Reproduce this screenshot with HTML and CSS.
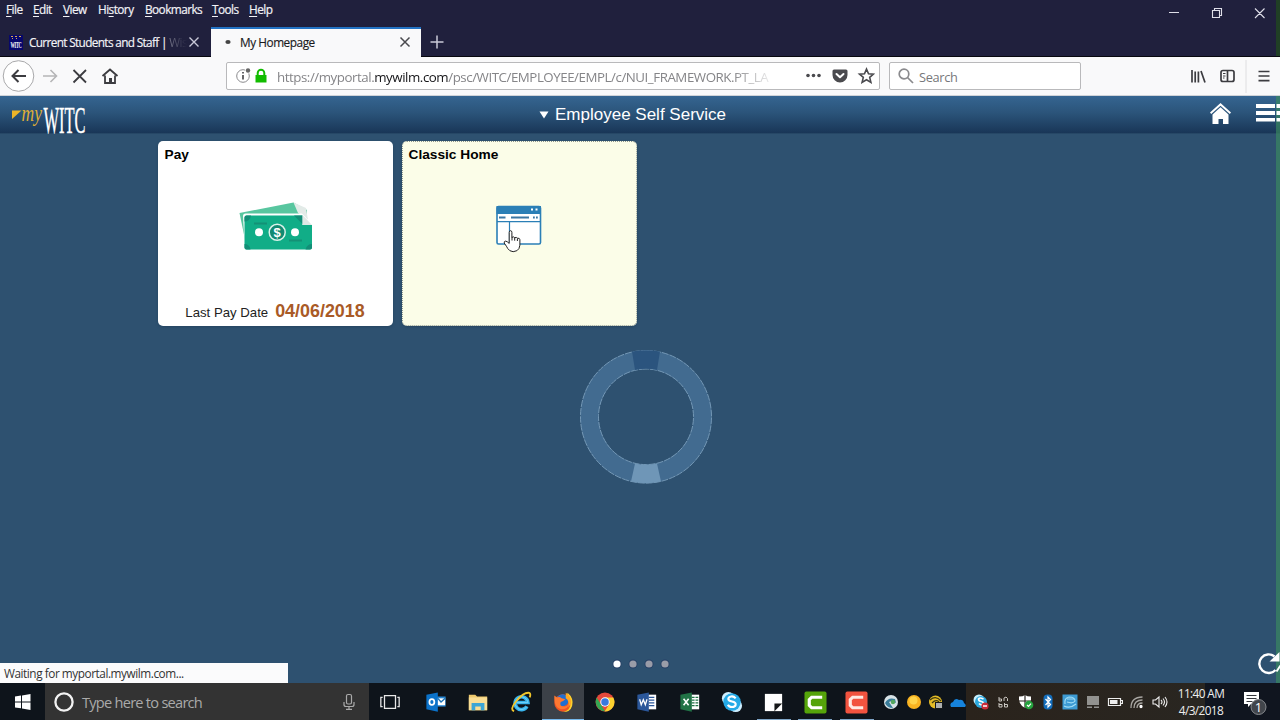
FILE: index.html
```html
<!DOCTYPE html>
<html lang="en">
<head>
<meta charset="utf-8">
<title>My Homepage</title>
<link rel="stylesheet" href="styles.css">
</head>
<body>
<div class="screen">
  <header class="titlebar">
    <div class="menurow">
      <nav class="menu"><span><u>F</u>ile</span><span><u>E</u>dit</span><span><u>V</u>iew</span><span>Hi<u>s</u>tory</span><span><u>B</u>ookmarks</span><span><u>T</u>ools</span><span><u>H</u>elp</span></nav>
      <svg class="winbtns" width="116" height="27" viewBox="0 0 116 27" fill="none" stroke="#dedee8" stroke-width="1.1"><path d="M5 13.500h10M48.500 11.500h7v7h-7zM50.500 11.500v-2h7v7h-2M91 9.500l9.500 9.500M100.500 9.500L91 19"/></svg>
    </div>
    <div class="tabs">
      <div class="tab">
        <svg width="16" height="16" viewBox="0 0 16 16"><path fill="#07076b" d="M1 1h14v15H1z"/><path fill="#d8a64c" d="M3 2h2v1H3zM7 2h2v1H7zM11 2h2v1h-2zM4 4h1v1H4zM8 4h1v1H8z"/><text x="2.500" y="14" class="favtext" textLength="11" lengthAdjust="spacingAndGlyphs">WITC</text></svg>
        <span class="tabtext">Current Students and Staff | <i>Wis</i></span>
        <svg class="tabx" width="12" height="12" viewBox="0 0 12 12"><path d="M1.500 1.500l9 9M10.500 1.500l-9 9" stroke="#c9c9d8" stroke-width="1.400"/></svg>
      </div>
      <div class="tab active">
        <svg class="load" width="6" height="6" viewBox="0 0 6 6"><ellipse cx="3" cy="3" rx="2.600" ry="2" fill="#444"/></svg>
        <span class="tabtext">My Homepage</span>
        <svg class="tabx" width="12" height="12" viewBox="0 0 12 12"><path d="M1.500 1.500l9 9M10.500 1.500l-9 9" stroke="#4a4a4e" stroke-width="1.500"/></svg>
      </div>
      <svg class="plus" width="14" height="14" viewBox="0 0 14 14"><path d="M7 .5v13M.5 7h13" stroke="#c9c9d8" stroke-width="1.500"/></svg>
    </div>
  </header>
  <div class="toolbar">
    <svg class="navicons" width="126" height="38" viewBox="0 0 126 38" fill="none" stroke="#3c3c40" stroke-width="2">
      <circle cx="18.500" cy="19" r="15.300" fill="#fff" stroke="#a9a9ab" stroke-width="1"/>
      <path d="M12.500 19H26M18.500 13l-6 6 6 6"/>
      <path d="M43 19h13.500M50.500 13l6 6-6 6" stroke="#b5b5b7" stroke-width="1.600"/>
      <path d="M73.500 13l12.500 12.500M86 13L73.500 25.500" stroke-width="1.800"/>
      <path d="M102.500 19l7.500-6.500 7.500 6.500M105 18.500V26h10v-7.500" stroke-width="1.800"/><path d="M109 21h3v5h-3z" fill="#3c3c40" stroke="none"/>
    </svg>
    <div class="field url">
      <svg width="36" height="20" viewBox="0 0 36 20" fill="none"><circle cx="8" cy="10" r="6.300" stroke="#8b8b8e"/><path d="M8 9v4.500M8 6v1.600" stroke="#4c4c50" stroke-width="1.700"/><circle cx="13" cy="4.500" r="3" fill="#fff"/><circle cx="13" cy="4.500" r="2.200" fill="#666"/><path d="M20.500 9h11v7.500h-11z" fill="#12bc00"/><path d="M22.700 9V7a3.300 3.300 0 0 1 6.600 0v2" stroke="#12bc00" stroke-width="2"/></svg>
      <span class="urltext">https://myportal.<b>mywilm.com</b>/psc/WITC/EMPLOYEE/EMPL/c/NUI_FRAMEWORK.PT_LA</span>
      <svg class="urlicons" width="74" height="20" viewBox="0 0 74 20"><g fill="#4a4a4e"><circle cx="7" cy="9.500" r="1.800"/><circle cx="12.500" cy="9.500" r="1.800"/><circle cx="18" cy="9.500" r="1.800"/><path d="M33 3.500h12q1.500 0 1.500 1.500v4a7.500 7.500 0 0 1-15 0V5q0-1.500 1.500-1.500z"/></g><path d="M35.500 8l3.500 3.300L42.500 8" fill="none" stroke="#fff" stroke-width="2" stroke-linecap="round" stroke-linejoin="round"/><path d="M65.500 3l2 4.700 5 .4-3.800 3.300 1.200 5-4.400-2.700-4.400 2.700 1.200-5-3.800-3.300 5-.4z" fill="none" stroke="#4a4a4e" stroke-width="1.600"/></svg>
    </div>
    <div class="field search"><svg width="18" height="18" viewBox="0 0 18 18" fill="none" stroke="#8a8a8d" stroke-width="1.700"><circle cx="7" cy="7" r="4.800"/><path d="M10.500 10.500l5.500 5.500"/></svg><span>Search</span></div>
    <svg class="toolicons" width="90" height="38" viewBox="0 0 90 38" fill="none" stroke="#3c3c40" stroke-width="1.700"><path d="M2 13v12.500M5.200 14.500v11M8.400 14.500v11M11 14l4 11.500"/><rect x="31" y="13.500" width="13" height="11" rx="2"/><path d="M37.500 13.500v11"/><path d="M33 16.500h2.500M33 19h2.500M33 21h1.500" stroke-width="1"/><path d="M56 3v33" stroke="#dedee0" stroke-width="1"/><path d="M68.500 14.500h11M68.500 19h11M68.500 23.700h11"/></svg>
  </div>
  <div class="appbar">
    <svg class="logo" width="80" height="34" viewBox="0 0 80 34"><path d="M2 10.500h9.500L2 19z" fill="#edb528"/><text x="11.500" y="21" class="my" textLength="20.500" lengthAdjust="spacingAndGlyphs">my</text><text x="33.500" y="33" class="witc" textLength="42" lengthAdjust="spacingAndGlyphs">WITC</text></svg>
    <div class="apptitle"><svg width="10" height="8" viewBox="0 0 10 8"><path d="M.5.500h9L5 7.500z" fill="#fff"/></svg><span>Employee Self Service</span></div>
    <svg class="appicons" width="72" height="38" viewBox="0 0 72 38" fill="#fff"><path d="M2 16.500L12.500 7l10.500 9.500-1.200 1.500-9.300-8.300L3.200 18z"/><path d="M4.500 18.500l8-7.200 8 7.200V28H15v-5h-4.500v5h-6z"/><path d="M48 8h19v4H48zM48 15h19v4H48zM48 22h19v3.500H48zM68.500 8H72v4h-3.500zM68.500 15H72v4h-3.500zM68.500 22H72v3.500h-3.500z"/></svg>
  </div>
  <main class="page">
    <div class="tiles">
      <section class="tile">
        <h2>Pay</h2>
        <svg class="money" width="76" height="52" viewBox="0 0 76 52"><path d="M1.500 12L55.500 1.500 69 9v12L8 43z" fill="#58c69f"/><path d="M55.500 1.500L68 7l2 12-10-7z" fill="#e3ebe8"/><path d="M5 15q0-2.500 2.500-2.500h56.500L75 24v26H7z" fill="#fff"/><path d="M8.500 14.500H64.500V24H74v22.500q0 2-2 2H8.500q-2 0-2-2v-30q0-2 2-2z" fill="#11ad87"/><path d="M8.500 14.500H13q-1 6-6.500 6v-4q0-2 2-2zM74 43v3.500q0 2-2 2h-4.500Q69 43 74 43zM6.500 43q5 0 6 5.500h-4q-2 0-2-2zM56 14.500h8.500V23z" fill="#138e77"/><path d="M64.500 14v10H74z" fill="#dfe8e5"/><path d="M16 22.500h13M51 39.500h13" stroke="#149176" stroke-width="2"/><circle cx="21" cy="31.300" r="4" fill="#fff"/><circle cx="57" cy="31.300" r="4" fill="#fff"/><circle cx="39.200" cy="31.300" r="8" fill="#128a72" stroke="#d9f2e9" stroke-width="1.500"/><text x="39.200" y="36" class="dollar">$</text></svg>
        <p><span>Last Pay Date</span><strong>04/06/2018</strong></p>
      </section>
      <section class="tile hover">
        <h2>Classic Home</h2>
        <svg class="window" width="46" height="50" viewBox="0 0 46 50"><rect x="1" y="1.500" width="43.500" height="37.500" rx="1.500" fill="#fff" stroke="#2b7fb6" stroke-width="1.600"/><path d="M.5 1h44.500v8H.500z" fill="#2b7fb6"/><path d="M35 3.500h2v2h-2zM39.500 3.500h2v2h-2z" fill="#fff"/><path d="M3 12.500h6.500M15 12.500h18M37 12.500h1.800M40 12.500h1.800" stroke="#3a77a4" stroke-width="1.800"/><path d="M1 16.700h43M13.500 17v21" stroke="#2b7fb6" stroke-width="1.200"/><path d="M13.200 27.500q0-1.800 1.300-1.800 1.400 0 1.400 1.800v4.800q2-1 2.800.4 2-.8 2.700.5 2.300-.4 2.500 1.500v5.500q-.4 4-3 5.500-4 2-7 0-2.500-2-3.500-4.500L8.200 38q-.3-1.800 1.500-1.900 1.500.3 3.500 2.300z" fill="#fff" stroke="#222" stroke-width="1"/><path d="M16 32v3.500M18.700 32.700v3M21.400 33.500v2.500" stroke="#222"/></svg>
      </section>
    </div>
    <div class="spin"><svg width="134" height="136" viewBox="0 0 134 136"><path fill-rule="evenodd" fill="#426b90" stroke="#7498b6" stroke-width="1" stroke-dasharray="7 1" d="M67 1.500a65.500 66.300 0 1 1 0 132.600a65.500 66.300 0 1 1 0-132.600zM67 20a47.500 47.800 0 1 0 0 95.600a47.500 47.800 0 1 0 0-95.600z"/><path d="M53 2.500q14-2.500 28 0l-3 18.500q-11-2.500-22 0z" fill="#2b547e"/><path d="M56 114.500q11 2.500 22 0l4 18q-15 3.500-30 0z" fill="#6f96b7"/></svg></div>
    <div class="pager"><i class="on"></i><i></i><i></i><i></i></div>
    <svg class="refresh" width="26" height="28" viewBox="0 0 26 28" fill="none" stroke="#fff" stroke-width="2.400"><path d="M20.500 20a9.300 9.300 0 1 1-1-13.500"/><path d="M14.500 11.500h10V2z" fill="#fff" stroke="none"/><path d="M21.500 21.500l4-6" stroke-width="2"/></svg>
    <div class="status">Waiting for myportal.mywilm.com...</div>
  </main>
  <footer class="taskbar">
    <div class="start"><svg width="16" height="16" viewBox="0 0 16 16" fill="#fff"><path d="M0 2.500L6 1.600V7.500H0zM7 1.400L15.500 0V7.500H7zM0 8.500h6v5.800L0 13.500zM7 8.500h8.500V16L7 14.600z"/></svg></div>
    <div class="find"><svg width="22" height="22" viewBox="0 0 22 22"><circle cx="11" cy="11" r="8.600" fill="none" stroke="#f2f2f2" stroke-width="2.300"/></svg><span>Type here to search</span><svg class="mic" width="12" height="18" viewBox="0 0 12 18" fill="none" stroke="#aaa" stroke-width="1.200"><rect x="3.500" y="1.500" width="5" height="9.500" rx="1.500"/><path d="M1 9v2.500q0 2 2 2h6q2 0 2-2V9M6 13.500V16M3 16.300h6"/></svg></div>
    <div class="apps">
      <span class="app first"><svg viewBox="0 0 24 24" fill="none" stroke="#e8e8e8" stroke-width="1.400"><path d="M6 5h12v14H6zM4 7H2v10h2M20 7h2v10h-2"/></svg></span>
      <span class="app"><svg viewBox="0 0 24 24"><path d="M11 6h11.500v11H11z" fill="#2687d4"/><path d="M13 8h9v7.500h-9z" fill="#fff"/><path d="M14 8l3.500 4L22 8" fill="none" stroke="#1b71b5" stroke-width="1.500"/><path d="M1.500 4L14 1.500v21L1.500 20z" fill="#0b72c9"/><ellipse cx="7.500" cy="12" rx="2.700" ry="3.200" fill="none" stroke="#fff" stroke-width="1.900"/></svg></span>
      <span class="app"><svg viewBox="0 0 24 24"><path d="M2 4h7l2 2h11v15H2z" fill="#edc86c"/><path d="M2 7h20v14H2z" fill="#f9dd94"/><path d="M5 13h14v8h-4v-4H9v4H5z" fill="#3ca5d5"/></svg></span>
      <span class="app"><svg viewBox="0 0 24 24" fill="none"><path d="M18.500 17a7 7 0 1 1 1-4.500H7" stroke="#37b4ed" stroke-width="4"/><path d="M18.500 17a7 7 0 1 1 1-4.500H7" stroke="#76d3fa" stroke-width="1"/><path d="M4.500 22q-5-1.500 2-10.500Q15 1 21 2q2 1 .5 5" stroke="#f1c52a" stroke-width="2"/></svg></span>
      <span class="app current"><svg viewBox="0 0 24 24"><circle cx="12" cy="13" r="9.500" fill="#f05524"/><path d="M17 2q7 6 5 14-2 7-10 7 9-3 8-10-1-4-4-6z" fill="#ffd22c"/><circle cx="11.500" cy="10" r="6.500" fill="#216ed1"/><path d="M2.500 5l3 2q3-1 5 1l4 1q-3 3-5 3-2 5 4 5 3 0 5-3-1 6-8 6Q2 19 2.500 5z" fill="#ff7831"/><path d="M15 2q5 3 6 10l-3 6q1-8-3-10z" fill="#ffa623"/></svg></span>
      <span class="app"><svg viewBox="0 0 24 24"><circle cx="12" cy="12" r="10.300" fill="#e5493b"/><path d="M3 7l9 15A10.300 10.300 0 0 1 3 7z" fill="#35a853"/><path d="M12 7h9a10.300 10.300 0 0 1-9.500 15.300L17 14z" fill="#fcd22f"/><circle cx="12" cy="12" r="5.200" fill="#fff"/><circle cx="12" cy="12" r="4.100" fill="#3979df"/></svg></span>
      <span class="app"><svg viewBox="0 0 24 24"><path d="M13 4h9v16h-9z" fill="#fff"/><path d="M14 7h6M14 10h6M14 13h6M14 16h6" stroke="#2b579a" stroke-width="1.300"/><path d="M1.500 4L14 1.500v21L1.500 20z" fill="#2b579a"/><path d="M4 9l1.700 6L8 9.500l2.200 5.500 1.800-6" fill="none" stroke="#fff" stroke-width="1.400"/></svg></span>
      <span class="app"><svg viewBox="0 0 24 24"><path d="M13 4h9v16h-9z" fill="#fff"/><path d="M14 7h3M18 7h3M14 10h3M18 10h3M14 13h3M18 13h3M14 16h3M18 16h3" stroke="#217346" stroke-width="1.500"/><path d="M1.500 4L14 1.500v21L1.500 20z" fill="#217346"/><path d="M5 8.500l5.500 7M10.500 8.500l-5.500 7" stroke="#fff" stroke-width="1.700"/></svg></span>
      <span class="app"><svg viewBox="0 0 24 24"><circle cx="8" cy="8" r="7" fill="#cfefff"/><circle cx="16" cy="16" r="7" fill="#cfefff"/><circle cx="12" cy="12" r="9.500" fill="#24aae7"/><path d="M16 8q-2-2.500-5-2-3 .5-3 2.700 0 2 4 2.800 4.500.8 4 3.500-.5 2.500-4 2.500-3.200 0-4.500-2.500" fill="none" stroke="#fff" stroke-width="2.300"/></svg></span>
      <span class="app near run"><svg viewBox="0 0 24 24"><path d="M3 3h18v18H3z" fill="#fff"/><path d="M13 13h8l-8 8z" fill="#151719"/></svg></span>
      <span class="app near run"><svg viewBox="0 0 24 24"><rect x=".5" y=".5" width="23" height="23" rx="2" fill="#55a40a"/><path d="M19 6.500H8L5.500 9v6L8 17.500h11" fill="none" stroke="#fff" stroke-width="3.300"/></svg></span>
      <span class="app near run"><svg viewBox="0 0 24 24"><rect x=".5" y=".5" width="23" height="23" rx="2" fill="#f2533f"/><path d="M19 6.500H8L5.500 9v6L8 17.500h11" fill="none" stroke="#ffe9e3" stroke-width="3.300"/></svg></span>
    </div>
    <div class="tray">
      <span><svg viewBox="0 0 16 16"><circle cx="8" cy="8" r="7" fill="#d8e2e6"/><path d="M2 9q3-6 10-4l1 4q-4-3-7-1l4 6q-6 0-8-5z" fill="#397c9a"/><circle cx="10" cy="8" r="2.200" fill="#53a75d"/></svg></span>
      <span><svg viewBox="0 0 16 16"><circle cx="8" cy="8" r="7" fill="#f9b321"/><circle cx="7.500" cy="6.500" r="4" fill="#ffd34a"/></svg></span>
      <span><svg viewBox="0 0 16 16"><circle cx="7.500" cy="8" r="6.500" fill="#e5bc26"/><path d="M2 6q6-5 11 1M4 9q4-4 7-1" fill="none" stroke="#3e3812" stroke-width="1.200"/><path d="M7 8h8v7H7z" fill="#15191c"/><path d="M8 9h6v5H8z" fill="#aeb0b1"/></svg></span>
      <span><svg viewBox="0 0 16 16"><path d="M1 13q-2-4 2-5 2-5 6-2 4-1 5 3 3 2 1 4z" fill="#1683dd"/></svg></span>
      <span><svg viewBox="0 0 16 16"><circle cx="6" cy="6" r="5.500" fill="#c6eefd"/><circle cx="8" cy="8" r="6" fill="#2ba9df"/><path d="M10.500 5q-4-2-5 0 0 2 3 2.500 3 1 1.500 3-2 1-4-1" fill="none" stroke="#fff" stroke-width="1.700"/><circle cx="12" cy="12" r="3.600" fill="#c92b39"/><path d="M10 12h4" stroke="#fff" stroke-width="1.500"/></svg></span>
      <span><svg viewBox="0 0 16 16" fill="none" stroke="#c9c6c0" stroke-width="1"><path d="M4 3v4h2.500V5H4M9 7V4l2-1 1.500 1.500V7M4 9v4h3v-2.500H4M9.500 9v4h3v-2.500h-3"/></svg></span>
      <span><svg viewBox="0 0 16 16"><path d="M1 2.500q4 0 6-1.500 2 1.500 6 1.500 1 8-6 11.500-7-3.500-6-11.500z" fill="#fff"/><path d="M7 1v13M1 7h12" stroke="#2d2923" stroke-width="1.200"/><circle cx="11" cy="11" r="4.300" fill="#25a23e"/><path d="M9 11l1.500 1.500L13 9.700" fill="none" stroke="#fff" stroke-width="1.200"/></svg></span>
      <span><svg viewBox="0 0 16 16" fill="none"><rect x="3.500" y=".5" width="9" height="15" rx="4" fill="#136dbb"/><path d="M5.500 5l5 5.500L8 13V3l2.500 2.500-5 5.500" stroke="#fff" stroke-width="1.200"/></svg></span>
      <span><svg viewBox="0 0 16 16"><path d="M.5.500h15v15H.500z" fill="#3d9bd3"/><path d="M3 10q-1-6 4-7 6 0 6 4-2 3-8 1M2 12q6 3 12-2M5 5h7" fill="none" stroke="#9fdcf5" stroke-width="1.200"/></svg></span>
      <span><svg viewBox="0 0 16 16" fill="#92928f"><path d="M2 2h12v9H2zM2 12.500h5V14H2zM9 12.500h5V14H9z"/></svg></span>
      <span><svg viewBox="0 0 16 16"><path d="M1.500 4.500h12v7h-12zM14 6.500h1.500v3H14" fill="none" stroke="#eee" stroke-width="1.200"/><path d="M3 6h7.500v4H3z" fill="#eee"/></svg></span>
      <span><svg viewBox="0 0 16 16" fill="none" stroke="#a8a6a2" stroke-width="1.300"><path d="M2 14Q2 3 13.500 3M5 14Q5 6 13.500 6M8 14q0-5 5.500-5"/><circle cx="12" cy="12.500" r="1" fill="#fff" stroke="#fff"/></svg></span>
      <span><svg viewBox="0 0 16 16" fill="none" stroke="#eee" stroke-width="1.100"><path d="M1 6h2.500L7 3v10L3.500 10H1zM9 6q2 2 0 4M11 4.500q3 3.500 0 7M13 3q4 5 0 10"/></svg></span>
    </div>
    <div class="clock"><span>11:40 AM</span><span>4/3/2018</span></div>
    <svg class="note" width="26" height="28" viewBox="0 0 26 28"><path d="M2 3h15v12h-8l-3 3v-3H2z" fill="#fff"/><path d="M4.500 6.500h10M4.500 9.500h10M4.500 12.500h6" stroke="#33363b" stroke-width="1"/><circle cx="16.500" cy="18" r="7.500" fill="#41454b" stroke="#85888c"/><text x="16.500" y="22.500" class="count">1</text></svg>
  </footer>
  <div class="edge"><i></i><b></b></div>
</div>
</body>
</html>
```
FILE: styles.css
```css
* { box-sizing: border-box; }
body { margin: 0; background: #2e5170; font-family: "Open Sans", "Noto Sans", sans-serif; }
svg { display: block; flex: none; }
.screen { position: relative; width: 1280px; height: 720px; overflow: hidden; display: flex; flex-direction: column; }
.titlebar { height: 57px; background: #20203d; border-bottom: 1px solid #08080f; flex: none; }
.menurow { height: 27px; display: flex; justify-content: space-between; }
.menu { display: grid; grid-template-columns: 27px 30px 35px 47px 67px 37px 40px; padding-left: 6px; color: #f2f2f6; font-size: 11.8px; line-height: 19px; letter-spacing: -0.55px; white-space: nowrap; -webkit-text-stroke: 0.2px; }
.menu u { text-underline-offset: 2px; }
.winbtns { margin-left: auto; margin-top: -1px; }
.tabs { display: flex; height: 30px; }
.tab { width: 211px; height: 29px; display: flex; align-items: center; padding: 0 11px 0 8px; color: #f5f5f8; font-size: 11.8px; letter-spacing: -0.65px; white-space: nowrap; -webkit-text-stroke: 0.15px; }
.tab .tabtext { margin-left: 5px; }
.tab i { font-style: normal; background: linear-gradient(90deg, #777789, #20203d); -webkit-background-clip: text; background-clip: text; color: transparent; -webkit-text-stroke: 0; }
.tab .tabx { margin-left: auto; }
.tab.active { width: 210px; height: 30px; background: #f9f9fa; color: #1a1a1c; border-top: 2px solid #2373c4; padding: 0 10px 2px 14px; letter-spacing: -0.45px; }
.active .tabtext { margin-left: 9px; }
.plus { margin: 8px 0 0 9px; }
.favtext { font: bold 8px "Liberation Serif", serif; fill: #fff; }
.toolbar { height: 39px; flex: none; display: flex; align-items: center; background: #f9f9fa; border-bottom: 1px solid #d0d3d8; }
.field { display: flex; align-items: center; height: 28px; background: #fff; border: 1px solid #b9b9bb; border-radius: 2px; }
.url { width: 654px; margin-left: 100px; padding: 0 4px 0 8px; color: #858588; font-size: 13.3px; }
.urltext { width: 504px; margin-left: 6px; padding-top: 1px; letter-spacing: -0.45px; overflow: hidden; white-space: nowrap; -webkit-mask-image: linear-gradient(90deg, #000 455px, transparent 500px); mask-image: linear-gradient(90deg, #000 455px, transparent 500px); }
.urltext b { font-weight: 400; color: #151518; }
.urlicons { margin-left: auto; }
.search { width: 192px; margin-left: 9px; padding-left: 7px; color: #77777a; font-size: 12.8px; letter-spacing: -0.35px; }
.search span { margin-left: 4px; padding-top: 1px; }
.toolicons { margin-left: auto; }
.appbar { height: 38px; flex: none; display: grid; grid-template-columns: 539px 1fr 72px; background: linear-gradient(#356591, #2b547a 45%, #193657); border-bottom: 1px solid #264766; font-family: "Liberation Sans", Arial, sans-serif; color: #fff; }
.logo { margin: 4px 0 0 10px; overflow: visible; }
.my { font: italic 23px "Liberation Serif", serif; fill: #dfae36; }
.witc { font: 37px "Liberation Serif", serif; fill: #fff; stroke: #fff; stroke-width: 0.4px; }
.apptitle { display: flex; align-items: center; gap: 6px; font-size: 17px; padding: 0 0 1px 0; white-space: nowrap; }
.appicons { position: relative; z-index: 2; }
.page { position: relative; flex: 1; background: #2e5170; font-family: "Liberation Sans", Arial, sans-serif; overflow: hidden; display: flex; flex-direction: column; }
.tiles { display: flex; gap: 9px; padding: 7px 0 0 157.5px; }
.tile { width: 235px; height: 185px; flex: none; background: #fff; border-radius: 5px; padding: 6px 7px; box-shadow: 0 1px 3px #203d5699; display: flex; flex-direction: column; }
.tile.hover { background: #fbfde8; outline: 1px dotted #8e9990; outline-offset: -1px; }
.tile h2 { margin: 0; font-size: 13.7px; line-height: 15px; color: #000; }
.money { margin: 39px auto 0 73px; }
.window { margin: 43px auto 0 87.5px; }
.tile p { display: flex; align-items: baseline; gap: 7px; justify-content: center; margin: auto 0 -3px; font-size: 13.2px; line-height: 21px; color: #222; white-space: nowrap; }
.tile strong { font-size: 17.9px; color: #a95a26; }
.dollar { font: bold 13px "Liberation Sans", sans-serif; fill: #fff; text-anchor: middle; }
.spin { margin: 23px 0 0 578.5px; }
.pager { display: flex; gap: 8px; margin: auto 0 15px 613px; }
.pager i { width: 8px; height: 8px; border-radius: 50%; background: #9a9ca8; box-shadow: 0 0 0 1px #273f65; }
.pager i { transform: scale(.9); }
.pager .on { background: #fff; }
.refresh { position: absolute; left: 1255px; top: 516px; z-index: 2; }
.status { position: absolute; left: 0; bottom: 0; width: 288px; height: 20px; background: #fbfbfc; color: #333; font: 11.8px/21px "Open Sans", sans-serif; letter-spacing: -0.45px; padding-left: 4px; }
.taskbar { height: 37px; flex: none; display: flex; background: linear-gradient(90deg, #0e141b 966px, #2a231c 966px, #292621 1205px, #10151f 1205px); color: #eee; }
.start { width: 45px; display: flex; align-items: center; padding-left: 15px; }
.find { width: 324px; display: flex; align-items: center; background: #333; color: #aaa; font-size: 14.6px; letter-spacing: -0.75px; padding: 1px 14px 0 8px; white-space: nowrap; }
.find span { margin-left: 7px; }
.mic { margin-left: auto; }
.apps { display: flex; width: 511px; }
.app { width: 42.25px; flex: none; display: flex; align-items: center; justify-content: center; padding-top: 1px; }
.app svg { width: 22px; height: 22px; }
.app.first { width: 46px; padding-right: 4px; }
.app.near { width: 41.5px; }
.app.near svg { width: 23px; height: 23px; }
.app.run { background: linear-gradient(#7fa6c8, #7fa6c8) center bottom / 34px 1px no-repeat; }
.app.current { background: #3c4148; box-shadow: inset 0 -1px #76b9ed; }
.tray { display: grid; grid-template-columns: repeat(13, 22.4px); width: 291px; align-items: center; justify-items: center; padding-top: 1px; }
.tray svg { width: 16px; height: 16px; }
.clock { width: 60px; display: flex; flex-direction: column; align-items: center; font-size: 11.8px; line-height: 17px; padding-top: 2px; letter-spacing: -0.6px; white-space: nowrap; }
.note { margin: 6px 0 0 11px; }
.count { font: 13px "Open Sans", sans-serif; fill: #fff; text-anchor: middle; }
.edge { position: absolute; right: 0; top: 0; z-index: 1; width: 4px; height: 683px; display: flex; flex-direction: column; justify-content: space-between; }
.edge i { height: 56px; background: #203f25; }
.edge b { height: 587px; background: #3a8c5f; opacity: .65; }
```
